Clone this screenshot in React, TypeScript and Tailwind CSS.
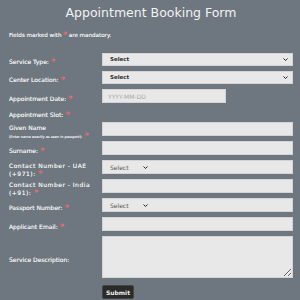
import type { ReactNode } from "react";

const Star = () => <span className="text-[7.5px] leading-none text-[#ff2a2a]"> *</span>;

function Chevron() {
  return (
    <svg viewBox="0 0 10 6" className="h-[3px] w-[5px]">
      <path d="M1 1l4 4 4-4" fill="none" stroke="#222" strokeWidth="2" />
    </svg>
  );
}

function Row({
  label,
  sub,
  req = true,
  spaced = false,
  className = "",
  children,
}: {
  label: ReactNode;
  sub?: string;
  req?: boolean;
  spaced?: boolean;
  className?: string;
  children?: ReactNode;
}) {
  return (
    <div className={`flex items-center ${className}`}>
      <div
        className={`w-[93px] shrink-0 pt-[5px] text-[6px] leading-[8px] text-[#ececec] [text-shadow:0_0_0.4px_#ececec] ${
          spaced ? "tracking-[0.5px]" : ""
        }`}
      >
        {label}
        {sub ? (
          <>
            <br />
            <span className="text-[3.5px] leading-[6px]">{sub}</span>
          </>
        ) : null}
        {req ? <Star /> : null}
      </div>
      {children}
    </div>
  );
}

const box = "h-full border border-[#d4d4d4] bg-[#e8e8e8]";

function Select({ wide = true }: { wide?: boolean }) {
  return (
    <div className={`${box} flex w-[191px] items-center pl-[7px] pr-[4px]`}>
      {wide ? (
        <>
          <span className="flex-1 text-[5.5px] font-bold text-[#333]">Select</span>
          <Chevron />
        </>
      ) : (
        <>
          <span className="w-[33px] text-[6px] text-[#555]">Select</span>
          <Chevron />
        </>
      )}
    </div>
  );
}

function Input({ w = "w-[191px]", placeholder }: { w?: string; placeholder?: string }) {
  return (
    <div className={`${box} ${w} flex items-center pl-[5px]`}>
      {placeholder ? <span className="text-[6px] text-[#a8a8a8]">{placeholder}</span> : null}
    </div>
  );
}

export default function App() {
  return (
    <div
      className="h-[300px] w-[300px] overflow-hidden bg-[#6e7780] pl-[9px] pr-[7px]"
      style={{ fontFamily: '"DejaVu Sans", Verdana, sans-serif' }}
    >
      <h1 className="pt-[5px] text-center text-[12.5px] leading-[16px] text-[#f2f2f2]">
        Appointment Booking Form
      </h1>
      <p className="mt-[10px] text-[5.6px] leading-[8px] text-[#ececec] [text-shadow:0_0_0.4px_#ececec]">
        Fields marked with <span className="text-[7.5px] leading-none text-[#ff2a2a]">*</span> are mandatory.
      </p>

      <div className="flex flex-col">
        <Row label="Service Type:" className="mt-[14px] h-[13px]">
          <Select />
        </Row>
        <Row label="Center Location:" className="mt-[5px] h-[13px]">
          <Select />
        </Row>
        <Row label="Appointment Date:" className="mt-[5px] h-[14px]">
          <Input w="w-[124px]" placeholder="YYYY-MM-DD" />
        </Row>
        <Row label="Appointment Slot:" className="mt-[2px] h-[14px]" />
        <Row
          label="Given Name"
          sub="(Enter name exactly as seen in passport):"
          className="mt-[3px] h-[14px]"
        >
          <Input />
        </Row>
        <Row label="Surname:" className="mt-[5px] h-[14px]">
          <Input />
        </Row>
        <Row
          spaced
          label={
            <>
              Contact Number - UAE
              <br />
              (+971):
            </>
          }
          className="mt-[5px] h-[14px]"
        >
          <Select wide={false} />
        </Row>
        <Row
          spaced
          label={
            <>
              Contact Number - India
              <br />
              (+91):
            </>
          }
          className="mt-[5px] h-[14px]"
        >
          <Input />
        </Row>
        <Row label="Passport Number:" className="mt-[5px] h-[14px]">
          <Select wide={false} />
        </Row>
        <Row label="Applicant Email:" className="mt-[5px] h-[14px]">
          <Input />
        </Row>
        <Row label="Service Description:" req={false} className="mt-[5px] h-[42px]">
          <textarea className="h-full w-[191px] resize border border-[#d4d4d4] bg-[#e8e8e8] outline-none" />
        </Row>
        <div className="mt-[7px] flex h-[14px]">
          <div className="w-[93px] shrink-0" />
          <button className="h-full w-[32px] rounded-[2px] border border-[#444] bg-[#2a2a2a] text-[6px] font-bold text-[#eee]">
            Submit
          </button>
        </div>
      </div>
    </div>
  );
}
